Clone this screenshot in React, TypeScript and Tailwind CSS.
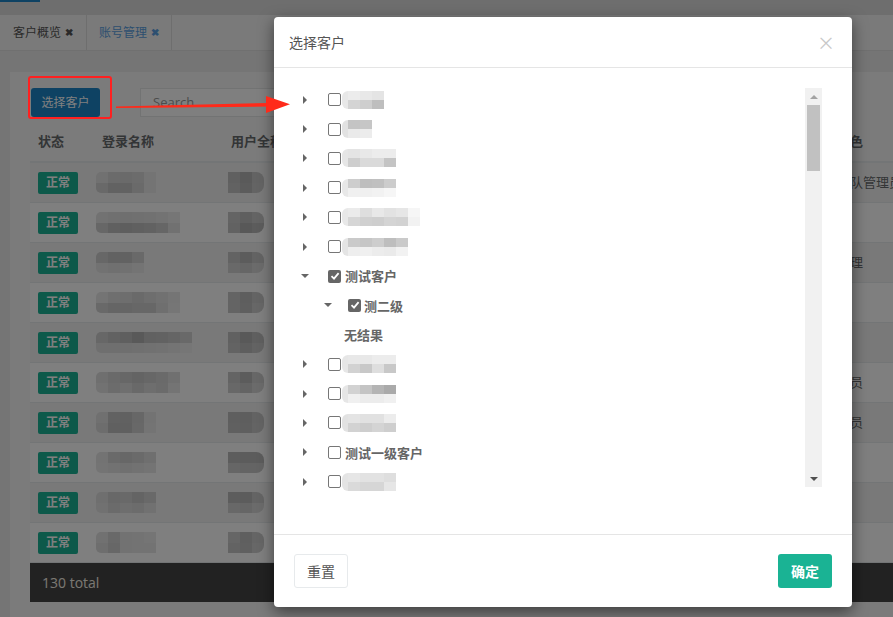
import React from "react";

const g = (v: number) => `rgb(${v},${v},${v})`;

function Pix({ top, bottom, edge }: { top: number[]; bottom: number[]; edge: number }) {
  return (
    <div className="flex items-stretch">
      <div className="w-[6px] rounded-l-full" style={{ backgroundColor: g(edge) }} />
      <div className="flex flex-col">
        <div className="flex">
          {top.map((v, i) => (
            <div key={i} className="w-[12px] h-[9px]" style={{ backgroundColor: g(v) }} />
          ))}
        </div>
        <div className="flex">
          {bottom.map((v, i) => (
            <div key={i} className="w-[12px] h-[9px]" style={{ backgroundColor: g(v) }} />
          ))}
        </div>
      </div>
    </div>
  );
}

function CaretRight() {
  return <span className="block w-0 h-0 border-y-[4px] border-y-transparent border-l-[4px] border-l-[#666]" />;
}
function CaretDown() {
  return <span className="block w-0 h-0 border-x-[4px] border-x-transparent border-t-[4px] border-t-[#666]" />;
}
function Box({ checked }: { checked?: boolean }) {
  if (checked)
    return (
      <span className="w-[13px] h-[13px] rounded-[2px] bg-[#666] flex items-center justify-center shrink-0">
        <svg width="10" height="10" viewBox="0 0 10 10">
          <path d="M1.5 5.2 L4 7.6 L8.6 2.2" fill="none" stroke="white" strokeWidth="1.8" />
        </svg>
      </span>
    );
  return <span className="block w-[13px] h-[13px] rounded-[2px] border border-[#767676] bg-white shrink-0" />;
}

type TreeRow =
  | { kind: "pix"; top: number[]; bottom: number[]; edge: number }
  | { kind: "text"; text: string };

const treeTop: TreeRow[] = [
  { kind: "pix", top: [236, 232, 228], bottom: [212, 206, 190], edge: 232 },
  { kind: "pix", top: [196, 198], bottom: [234, 236], edge: 226 },
  { kind: "pix", top: [228, 232, 236, 236], bottom: [206, 218, 218, 196], edge: 230 },
  { kind: "pix", top: [205, 190, 192, 204], bottom: [240, 240, 242, 246], edge: 232 },
  { kind: "pix", top: [235, 222, 232, 226, 230, 246], bottom: [214, 208, 206, 212, 210, 242], edge: 232 },
  { kind: "pix", top: [202, 198, 205, 190, 202], bottom: [238, 240, 236, 234, 242], edge: 228 },
];
const treeBottom: TreeRow[] = [
  { kind: "pix", top: [232, 232, 236, 236], bottom: [210, 200, 222, 200], edge: 230 },
  { kind: "pix", top: [210, 196, 180, 170], bottom: [240, 236, 236, 240], edge: 230 },
  { kind: "pix", top: [228, 225, 225, 236], bottom: [210, 206, 212, 206], edge: 226 },
  { kind: "text", text: "测试一级客户" },
  { kind: "pix", top: [230, 226, 226, 222], bottom: [218, 214, 214, 230], edge: 228 },
];

function Level0({ row }: { row: TreeRow }) {
  return (
    <div className="h-[29.4px] flex items-center">
      <span className="w-[22px] flex justify-center">
        <CaretRight />
      </span>
      <span className="ml-[12px]">
        <Box />
      </span>
      {row.kind === "pix" ? (
        <span className="ml-[1px]">
          <Pix top={row.top} bottom={row.bottom} edge={row.edge} />
        </span>
      ) : (
        <span className="ml-[4px] text-[13px] font-semibold text-[#666]">{row.text}</span>
      )}
    </div>
  );
}

type Cell = { top: number[]; bottom: number[] };
const loginCells: Cell[] = [
  { top: [226, 214, 212, 216, 232], bottom: [210, 196, 196, 212, 232] },
  { top: [228, 224, 222, 224, 226, 230, 236], bottom: [206, 192, 188, 192, 196, 204, 226] },
  { top: [206, 196, 196, 210], bottom: [228, 224, 226, 232] },
  { top: [232, 222, 220, 212, 220, 226, 234], bottom: [210, 202, 202, 206, 206, 222, 236] },
  { top: [206, 196, 190, 178, 194, 196, 202, 210], bottom: [222, 222, 222, 224, 226, 228, 232, 236] },
  { top: [222, 212, 206, 200, 206, 212, 224], bottom: [228, 216, 222, 210, 220, 214, 232] },
  { top: [224, 196, 194, 206, 230], bottom: [218, 192, 192, 208, 232] },
  { top: [230, 212, 206, 212, 222], bottom: [232, 228, 224, 228, 232] },
  { top: [222, 208, 210, 200, 210], bottom: [226, 214, 220, 216, 226] },
  { top: [226, 210, 228, 230, 234], bottom: [220, 206, 228, 230, 230] },
];
const nameCells: Cell[] = [
  { top: [192, 180, 198], bottom: [196, 184, 200] },
  { top: [200, 190, 200], bottom: [196, 176, 184] },
  { top: [198, 184, 198], bottom: [210, 204, 214] },
  { top: [200, 188, 200], bottom: [200, 190, 206] },
  { top: [194, 178, 190], bottom: [198, 188, 198] },
  { top: [200, 184, 206], bottom: [208, 200, 214] },
  { top: [190, 188, 198], bottom: [192, 190, 200] },
  { top: [186, 184, 184], bottom: [204, 200, 200] },
  { top: [186, 184, 200], bottom: [208, 204, 214] },
  { top: [204, 190, 202], bottom: [198, 192, 206] },
];
const roles = ["团队管理员", "", "经理", "", "", "成员", "成员", "", "", ""];

function CellPix({ c, round }: { c: Cell; round?: boolean }) {
  return (
    <div className={round ? "flex flex-col w-fit rounded-r-[8px] overflow-hidden" : "flex flex-col w-fit rounded-l-[5px] overflow-hidden"}>
      <div className="flex">
        {c.top.map((v, i) => (
          <div key={i} className="w-[12px] h-[11px]" style={{ backgroundColor: g(v) }} />
        ))}
      </div>
      <div className="flex">
        {c.bottom.map((v, i) => (
          <div key={i} className="w-[12px] h-[10px]" style={{ backgroundColor: g(v) }} />
        ))}
      </div>
    </div>
  );
}

export default function App() {
  return (
    <div className="relative w-[893px] h-[617px] overflow-hidden bg-[#eaeaea] font-['Open_Sans','Noto_Sans_CJK_SC',sans-serif] text-[#676a6c]">
      {/* top band */}
      <div className="h-[15px] bg-[#dcdcdc]">
        <div className="w-[40px] h-[2px] bg-[#1c84c6]" />
      </div>
      {/* tabs */}
      <div className="h-[36px] bg-[#f4f4f4] border-b border-[#e0e0e0] flex text-[12px]">
        <div className="w-[87px] border-r border-[#dcdcdc] flex items-center pl-[13px] text-[#555] gap-[4px]">
          <span>客户概览</span>
          <span className="text-[10px] font-bold">✖</span>
        </div>
        <div className="w-[85px] border-r border-[#dcdcdc] flex items-center pl-[12px] text-[#5a9fe0] gap-[4px]">
          <span>账号管理</span>
          <span className="text-[10px] font-bold">✖</span>
        </div>
      </div>
      {/* content */}
      <div className="pl-[10px] pt-[21px]">
        <div className="bg-[#f6f6f6] px-[20px] pt-[16px] h-[560px]">
          <div className="flex items-center h-[29px]">
            <div className="ml-[1px] w-[69px] h-[29px] bg-[#1c84c6] rounded-[3px] text-white text-[12px] flex items-center justify-center">
              选择客户
            </div>
            <div className="ml-[40px] w-[300px] h-[29px] border border-[#e5e6e7] bg-white pl-[12px] flex items-center text-[13px] text-[#999]">
              Search
            </div>
          </div>
          <div className="mt-[5px] w-[900px]">
            <div className="h-[41px] flex items-center border-b-2 border-[#e7eaec] pl-[8px] text-[13px] font-bold text-[#676a6c]">
              <div className="w-[58px]">状态</div>
              <div className="w-[132px] pl-[6px]">登录名称</div>
              <div className="w-[609px] pl-[3px]">用户全称</div>
              <div className="flex-1">角色</div>
            </div>
            {loginCells.map((c, i) => (
              <div
                key={i}
                className={
                  i % 2 === 0
                    ? "h-[40px] flex items-center border-b border-[#e7eaec] pl-[8px] bg-[#f3f3f3] text-[13px]"
                    : "h-[40px] flex items-center border-b border-[#e7eaec] pl-[8px] bg-white text-[13px]"
                }
              >
                <div className="w-[58px]">
                  <span className="w-[40px] h-[22px] rounded-[2px] bg-[#1ab394] text-white text-[12px] font-bold flex items-center justify-center">
                    正常
                  </span>
                </div>
                <div className="w-[132px]">
                  <CellPix c={c} />
                </div>
                <div className="w-[609px]">
                  <CellPix c={nameCells[i]} round />
                </div>
                <div className="flex-1 whitespace-nowrap text-[#676a6c]">{roles[i]}</div>
              </div>
            ))}
            <div className="h-[39px] bg-[#444] flex items-center pl-[12px] text-[14px] text-[#f5f0e6]">130 total</div>
          </div>
        </div>
      </div>

      {/* overlay */}
      <div className="absolute inset-0 bg-black/50" />

      {/* modal */}
      <div className="absolute left-[274px] top-[17px] w-[578px] h-[590px] bg-white rounded-[4px] shadow-[0_5px_15px_rgba(0,0,0,0.5)] flex flex-col font-['Noto_Sans_CJK_SC',sans-serif]">
        <div className="h-[51px] border-b border-[#e5e5e5] flex items-center justify-between pl-[15px] pr-[17px] shrink-0">
          <span className="text-[14px] text-[#555]">选择客户</span>
          <span className="text-[18px] leading-none text-[#c8c8c8]">×</span>
        </div>
        <div className="h-[466px] pt-[17px] pl-[20px] pr-[30px] flex shrink-0">
          <div className="flex-1 h-[420px] overflow-hidden">
            {treeTop.map((r, i) => (
              <Level0 key={i} row={r} />
            ))}
            <div className="h-[29.4px] flex items-center">
              <span className="w-[22px] flex justify-center">
                <CaretDown />
              </span>
              <span className="ml-[12px]">
                <Box checked />
              </span>
              <span className="ml-[4px] text-[13px] font-semibold text-[#666]">测试客户</span>
            </div>
            <div className="h-[29.4px] flex items-center pl-[23px]">
              <span className="w-[22px] flex justify-center">
                <CaretDown />
              </span>
              <span className="ml-[9px]">
                <Box checked />
              </span>
              <span className="ml-[3px] text-[13px] font-semibold text-[#666]">测二级</span>
            </div>
            <div className="h-[29.4px] flex items-center pl-[50px]">
              <span className="text-[13px] font-semibold text-[#666]">无结果</span>
            </div>
            {treeBottom.map((r, i) => (
              <Level0 key={i} row={r} />
            ))}
          </div>
          <div className="mt-[3px] w-[17px] h-[399px] bg-[#f1f1f1] flex flex-col">
            <div className="h-[17px] flex items-center justify-center">
              <span className="block w-0 h-0 border-x-[4px] border-x-transparent border-b-[4px] border-b-[#a3a3a3]" />
            </div>
            <div className="mx-[2px] h-[66px] bg-[#c1c1c1]" />
            <div className="flex-1" />
            <div className="h-[17px] flex items-center justify-center">
              <span className="block w-0 h-0 border-x-[4px] border-x-transparent border-t-[4px] border-t-[#505050]" />
            </div>
          </div>
        </div>
        <div className="flex-1 border-t border-[#e5e5e5] flex items-center justify-between px-[20px]">
          <button className="w-[54px] h-[34px] border border-[#e7eaec] rounded-[3px] bg-white text-[14px] text-[#555]">
            重置
          </button>
          <button className="w-[54px] h-[34px] rounded-[3px] bg-[#1ab394] text-[14px] font-semibold text-white">
            确定
          </button>
        </div>
      </div>

      {/* annotations */}
      <div className="absolute left-[28px] top-[76px] w-[84px] h-[43px] border-[2.5px] border-[#ff2020] rounded-[3px]" />
      <svg className="absolute left-[114px] top-[94px]" width="180" height="22" viewBox="0 0 180 22">
        <polygon points="2,12.6 156,9 156,12.6 2,14" fill="#ff2a1a" />
        <polygon points="152,2 176,10.2 152,19" fill="#ff2a1a" />
      </svg>
    </div>
  );
}
